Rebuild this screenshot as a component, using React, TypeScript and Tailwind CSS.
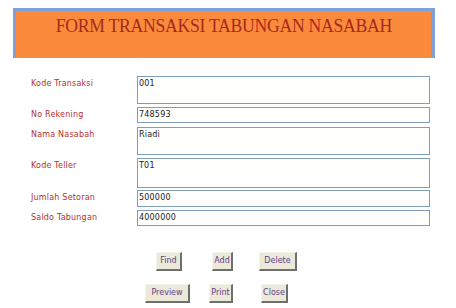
import React from "react";

const rows = [
  { label: "Kode Transaksi", value: "001", h: "h-[28px]", mt: "mt-0" },
  { label: "No Rekening", value: "748593", h: "h-[16px]", mt: "mt-[3px]" },
  { label: "Nama Nasabah", value: "Riadi", h: "h-[28px]", mt: "mt-[4px]" },
  { label: "Kode Teller", value: "T01", h: "h-[30px]", mt: "mt-[3px]" },
  { label: "Jumlah Setoran", value: "500000", h: "h-[17px]", mt: "mt-[2px]" },
  { label: "Saldo Tabungan", value: "4000000", h: "h-[16px]", mt: "mt-[3px]" },
];

function Btn({ children, w }: { children: React.ReactNode; w: string }) {
  return (
    <div
      className={`${w} h-[19px] bg-[#ece9d8] border-r-2 border-b-2 border-r-[#6f6f6f] border-b-[#6f6f6f] border-l border-t border-l-[#f4f3ee] border-t-[#f4f3ee] flex items-center justify-center text-[8px] text-[#5b3f86]`}
      style={{ fontFamily: "'DejaVu Sans', sans-serif" }}
    >
      {children}
    </div>
  );
}

export default function App() {
  return (
    <div className="w-[456px] h-[308px] bg-white relative overflow-hidden">
      <div className="pt-[8px] pl-[13px]">
        <div className="w-[422px] h-[50px] bg-[#fc8a3d] border-l-[3px] border-t-[3px] border-r-[4px] border-[#7ea2d8] flex justify-center pt-[3px]">
          <div
            className="text-[19px] leading-[24px] text-[#a32a1c] tracking-[-0.3px] scale-x-[0.93] whitespace-nowrap"
            style={{ fontFamily: "'Liberation Serif', serif" }}
          >
            FORM TRANSAKSI TABUNGAN NASABAH
          </div>
        </div>
      </div>
      <div className="pl-[31px] pt-[18px] flex flex-col">
        {rows.map((r) => (
          <div key={r.label} className={`flex ${r.mt}`}>
            <div
              className="w-[106px] h-[16px] leading-[16px] text-[8px] text-[#b3302e] tracking-[0.2px]"
              style={{ fontFamily: "'DejaVu Sans', sans-serif" }}
            >
              {r.label}
            </div>
            <div
              className={`w-[293px] ${r.h} border border-[#7f9db9] bg-[#fffffd] pl-[1px] text-[8px] leading-[13px] text-[#222] tracking-[0.2px]`}
              style={{ fontFamily: "'DejaVu Sans', sans-serif" }}
            >
              {r.value}
            </div>
          </div>
        ))}
      </div>
      <div className="flex pt-[26px]">
        <div className="ml-[156px]"><Btn w="w-[26px]">Find</Btn></div>
        <div className="ml-[30px]"><Btn w="w-[21px]">Add</Btn></div>
        <div className="ml-[26px]"><Btn w="w-[38px]">Delete</Btn></div>
      </div>
      <div className="flex pt-[13px]">
        <div className="ml-[145px]"><Btn w="w-[45px]">Preview</Btn></div>
        <div className="ml-[19px]"><Btn w="w-[24px]">Print</Btn></div>
        <div className="ml-[28px]"><Btn w="w-[27px]">Close</Btn></div>
      </div>
    </div>
  );
}
